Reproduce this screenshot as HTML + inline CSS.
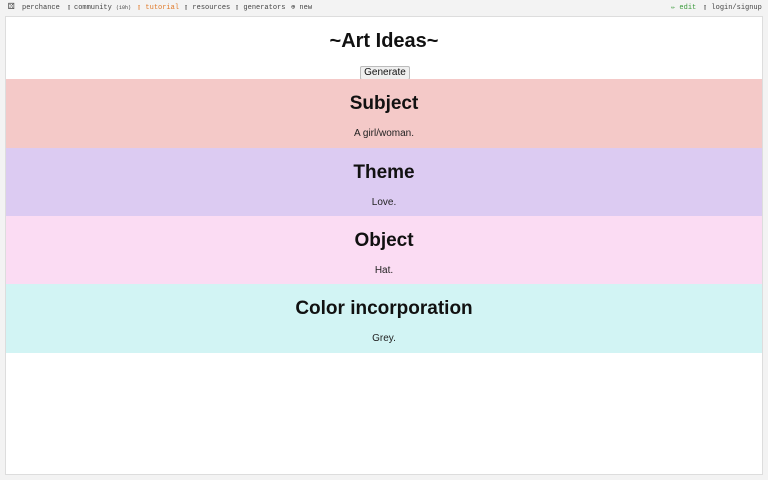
<!DOCTYPE html>
<html><head><style>
*{margin:0;padding:0;box-sizing:border-box}
body{width:768px;height:480px;background:#f3f3f3;font-family:"Liberation Sans",sans-serif;position:relative;overflow:hidden}
.bar{position:absolute;top:0;left:0;width:768px;height:16px;font-family:"Liberation Mono",monospace;font-size:7px;color:#444;line-height:17px}
.bar span{position:absolute;top:0}
.main{position:absolute;left:5px;top:16px;width:758px;height:459px;background:#fff;border:1px solid #ddd}
h1{position:absolute;left:0;width:100%;text-align:center;font-size:20px;font-weight:bold;color:#111}
.btn{position:absolute;left:354px;top:49px;width:50px;height:14px;background:#efefef;border:1px solid #bbb;border-radius:2px;font-size:10px;text-align:center;line-height:12px;color:#111}
.sec{position:absolute;left:0;width:756px;height:69px;text-align:center}
.sec h2{font-size:19px;font-weight:bold;color:#111;position:absolute;width:100%;top:14px}
.sec p{font-size:10px;color:#222;position:absolute;width:100%;top:49px}
</style></head><body>
<div class="bar">
<span style="left:8px;font-size:11px;line-height:15px">⚄</span>
<span style="left:22px">perchance</span>
<span style="left:67px">▯</span>
<span style="left:74px">community <small style="font-size:5px">(10h)</small></span>
<span style="left:137px;color:#e07a2a">▯ tutorial</span>
<span style="left:184px">▯ resources</span>
<span style="left:235px">▯ generators</span>
<span style="left:291px">⊕ new</span>
<span style="left:671px;color:#3a9a3a">✏ edit</span>
<span style="left:703px">▯ login/signup</span>
</div>
<div class="main">
<h1 style="top:13px">~Art Ideas~</h1>
<div class="btn">Generate</div>
<div class="sec" style="top:62px;background:#f4c9c8"><h2>Subject</h2><p>A girl/woman.</p></div>
<div class="sec" style="top:131px;background:#dccbf2;height:68px"><h2>Theme</h2><p>Love.</p></div>
<div class="sec" style="top:199px;background:#fbdcf3;height:68px"><h2>Object</h2><p>Hat.</p></div>
<div class="sec" style="top:267px;background:#d2f4f4;height:69px"><h2>Color incorporation</h2><p>Grey.</p></div>
</div>
</body></html>
